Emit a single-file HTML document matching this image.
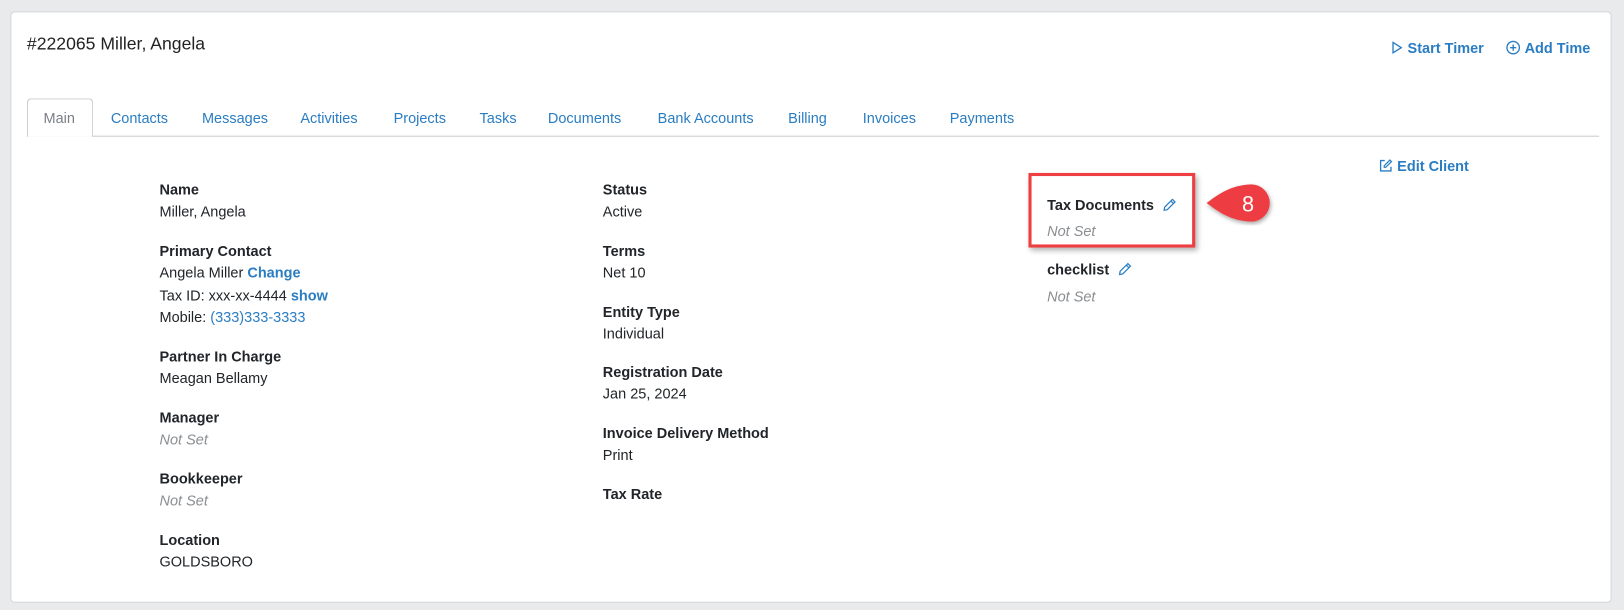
<!DOCTYPE html>
<html><head><meta charset="utf-8"><style>
*{margin:0;padding:0;box-sizing:border-box}
html,body{width:1624px;height:610px;overflow:hidden;background:#e9eaec;font-family:"Liberation Sans",sans-serif;color:#212529}
#w{position:absolute;left:0;top:0;width:1568px;height:589px;transform:scale(1.03571,1.0357);transform-origin:0 0}
.card{position:absolute;left:10px;top:11px;width:1546px;height:571px;background:#fff;border:1px solid #d4d6da;border-radius:4px}
.a{position:absolute;white-space:nowrap;font-size:14px;margin-top:2px}
.l{font-weight:bold}
.ns{font-style:italic;color:#8a8d91}
.blue{color:#2a7dc2}
.tab{position:absolute;top:106px;font-size:14px;color:#2a7dc2}
</style></head><body><div id="w">
<div class="card"></div>
<div class="a" style="left:26px;top:31px;font-size:17px;color:#222">#222065 Miller, Angela</div>
<div class="a blue" style="left:1344px;top:36px;font-weight:bold;font-size:14px"><svg width="10" height="12" viewBox="0 0 10 12" style="vertical-align:-1px;margin-right:5px"><path d="M1 1L9 6L1 11Z" fill="none" stroke="#2a7dc2" stroke-width="1.3"/></svg>Start Timer</div>
<div class="a blue" style="left:1454px;top:36px;font-weight:bold;font-size:14px"><svg width="14" height="14" viewBox="0 0 14 14" style="vertical-align:-2px;margin-right:4px"><circle cx="7" cy="7" r="6" fill="none" stroke="#2a7dc2" stroke-width="1.3"/><path d="M7 4V10M4 7H10" stroke="#2a7dc2" stroke-width="1.3"/></svg>Add Time</div>
<div style="position:absolute;left:26px;top:131px;width:1518px;height:1px;background:#c9ccd0"></div>
<div style="position:absolute;left:26px;top:95px;width:64px;height:37px;background:#fff;border:1px solid #c9ccd0;border-bottom:none;border-radius:4px 4px 0 0"></div>
<div class="tab" style="left:42px;color:#7b7f86">Main</div>
<div class="tab" style="left:107px">Contacts</div>
<div class="tab" style="left:195px">Messages</div>
<div class="tab" style="left:290px">Activities</div>
<div class="tab" style="left:380px">Projects</div>
<div class="tab" style="left:463px">Tasks</div>
<div class="tab" style="left:529px">Documents</div>
<div class="tab" style="left:635px">Bank Accounts</div>
<div class="tab" style="left:761px">Billing</div>
<div class="tab" style="left:833px">Invoices</div>
<div class="tab" style="left:917px">Payments</div>
<div class="a blue" style="left:1331px;top:150px;font-weight:bold"><svg width="14" height="14" viewBox="0 0 14 14" style="vertical-align:-2px;margin-right:4px"><path d="M6 2H2V12H12V8" fill="none" stroke="#2a7dc2" stroke-width="1.3"/><path d="M11 1.5L12.5 3L7 8.5H5.5V7Z" fill="none" stroke="#2a7dc2" stroke-width="1.2"/></svg>Edit Client</div>

<div class="a l" style="left:154px;top:173px">Name</div>
<div class="a" style="left:154px;top:194px">Miller, Angela</div>
<div class="a l" style="left:154px;top:232px">Primary Contact</div>
<div class="a" style="left:154px;top:253px">Angela Miller <b class="blue">Change</b></div>
<div class="a" style="left:154px;top:275px">Tax ID: xxx-xx-4444 <b class="blue">show</b></div>
<div class="a" style="left:154px;top:296px">Mobile: <span class="blue">(333)333-3333</span></div>
<div class="a l" style="left:154px;top:334px">Partner In Charge</div>
<div class="a" style="left:154px;top:355px">Meagan Bellamy</div>
<div class="a l" style="left:154px;top:393px">Manager</div>
<div class="a ns" style="left:154px;top:414px">Not Set</div>
<div class="a l" style="left:154px;top:452px">Bookkeeper</div>
<div class="a ns" style="left:154px;top:473px">Not Set</div>
<div class="a l" style="left:154px;top:511px">Location</div>
<div class="a" style="left:154px;top:532px">GOLDSBORO</div>

<div class="a l" style="left:582px;top:173px">Status</div>
<div class="a" style="left:582px;top:194px">Active</div>
<div class="a l" style="left:582px;top:232px">Terms</div>
<div class="a" style="left:582px;top:253px">Net 10</div>
<div class="a l" style="left:582px;top:291px">Entity Type</div>
<div class="a" style="left:582px;top:312px">Individual</div>
<div class="a l" style="left:582px;top:349px">Registration Date</div>
<div class="a" style="left:582px;top:370px">Jan 25, 2024</div>
<div class="a l" style="left:582px;top:408px">Invoice Delivery Method</div>
<div class="a" style="left:582px;top:429px">Print</div>
<div class="a l" style="left:582px;top:467px">Tax Rate</div>

<div style="position:absolute;left:993px;top:167px;width:161px;height:72px;border:3px solid #ee3e42;box-shadow:2px 3px 5px rgba(0,0,0,.3)"></div>
<div class="a l" style="left:1011px;top:188px">Tax Documents <svg width="14" height="14" viewBox="0 0 14 14" style="vertical-align:-2px;margin-left:4px"><path d="M2 12L2.5 9L10 1.5L12.5 4L5 11.5Z M8.5 3L11 5.5" fill="none" stroke="#2a7dc2" stroke-width="1.2"/></svg></div>
<div class="a ns" style="left:1011px;top:213px">Not Set</div>
<div class="a l" style="left:1011px;top:250px">checklist <svg width="14" height="14" viewBox="0 0 14 14" style="vertical-align:-2px;margin-left:4px"><path d="M2 12L2.5 9L10 1.5L12.5 4L5 11.5Z M8.5 3L11 5.5" fill="none" stroke="#2a7dc2" stroke-width="1.2"/></svg></div>
<div class="a ns" style="left:1011px;top:276px">Not Set</div>
<svg style="position:absolute;left:1162px;top:174px" width="74" height="48" viewBox="0 0 74 48"><defs><filter id="s"><feDropShadow dx="1" dy="2" stdDeviation="2" flood-opacity=".35"/></filter></defs><path d="M3 22C14 14 25 5 46 4A18 18 0 1 1 46 40C25 39 14 30 3 22Z" fill="#ee3e42" filter="url(#s)"/><text x="43" y="30" font-family="Liberation Sans,sans-serif" font-size="21" fill="#fff" text-anchor="middle">8</text></svg>
</div></body></html>
